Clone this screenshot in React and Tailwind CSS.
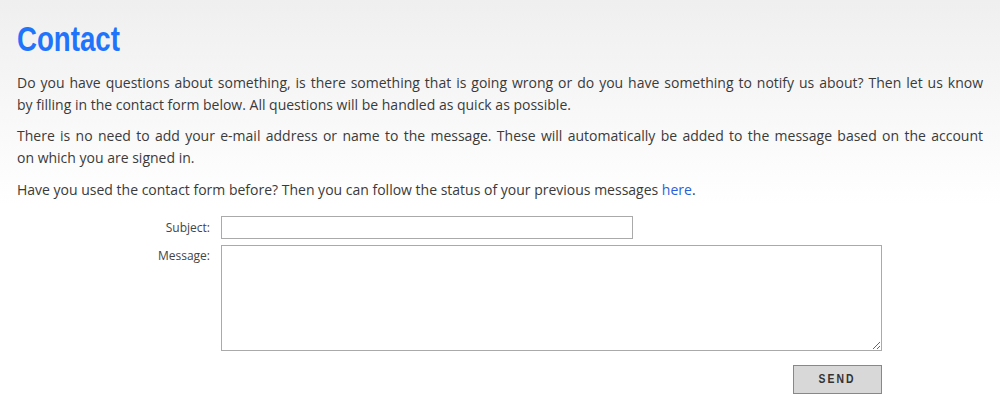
import React from "react";

const body = { fontFamily: '"Open Sans", "Noto Sans", sans-serif' };
const narrow = { fontFamily: '"Liberation Sans", Arial, sans-serif' };

// lines that must break exactly as in the page
const Line = ({ children, last }) => (
  <span
    className={
      last
        ? "block"
        : "block text-justify [text-align-last:justify]"
    }
  >
    {children}
  </span>
);

const App = () => {
  return (
    <div
      className="min-h-[409px] bg-gradient-to-b from-[#efefef] to-white to-[50%] px-[17px] pt-[18px] text-[#3a3a3a]"
      style={body}
    >
      <h1
        className="inline-block origin-left scale-x-[0.79] text-[35px] font-bold leading-[42px] text-[#1f74fb]"
        style={narrow}
      >
        Contact
      </h1>

      <div className="mt-[12px] text-[14px] leading-[21.5px]">
        <p>
          <Line>
            Do you have questions about something, is there something that is
            going wrong or do you have something to notify us about? Then let us
            know
          </Line>
          <Line last>
            by filling in the contact form below. All questions will be handled
            as quick as possible.
          </Line>
        </p>
        <p className="mt-[10px]">
          <Line>
            There is no need to add your e-mail address or name to the message.
            These will automatically be added to the message based on the
            account
          </Line>
          <Line last>on which you are signed in.</Line>
        </p>
        <p className="mt-[11px]">
          Have you used the contact form before? Then you can follow the status
          of your previous messages{" "}
          <a href="#" className="text-[#2b5fd9]">
            here
          </a>
          .
        </p>
      </div>

      <form className="mt-[15px] grid grid-cols-[193px_1fr] gap-x-[11px] gap-y-[6px] text-[12px]">
        <label className="pt-[4px] text-right leading-[16px] text-[#444]">
          Subject:
        </label>
        <input
          type="text"
          className="h-[23px] w-[412px] border border-[#aaa] bg-white px-1 outline-none"
        />
        <label className="pt-[3px] text-right leading-[16px] text-[#444]">
          Message:
        </label>
        <textarea className="block h-[106px] w-[661px] border border-[#aaa] bg-white p-1 outline-none" />
        <div />
        <div className="flex w-[661px] justify-end pt-[8px]">
          <button
            type="button"
            className="h-[29px] w-[89px] border border-[#888] bg-[#d8d8d8] text-[#333]"
          >
            <span
              className="inline-block scale-x-[0.8] text-[13px] font-bold tracking-[2.5px]"
              style={narrow}
            >
              SEND
            </span>
          </button>
        </div>
      </form>
    </div>
  );
};

export default App;
